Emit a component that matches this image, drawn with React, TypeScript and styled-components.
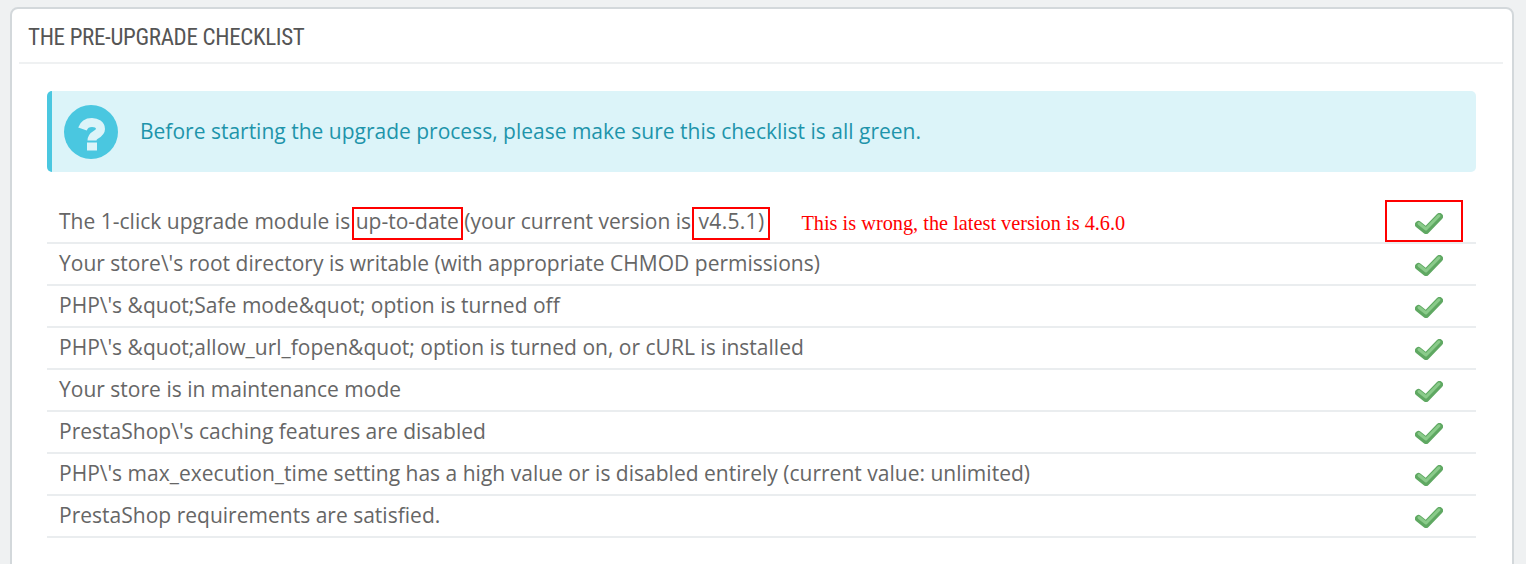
import type { ReactNode } from "react";
import styled, { createGlobalStyle } from "styled-components";

function CheckIcon() {
  return (
    <CheckSvg viewBox="0 0 28 24" aria-hidden="true">
      <path
        d="M3.5 13.5 L11 19.5 L24.5 5.5"
        fill="none"
        stroke="#5fa862"
        strokeWidth="7"
        strokeLinejoin="round"
        strokeLinecap="round"
      />
      <path
        d="M4 12.5 L11 18 L24 4.8"
        fill="none"
        stroke="#8acb8a"
        strokeWidth="3"
        strokeLinejoin="round"
        strokeLinecap="round"
      />
    </CheckSvg>
  );
}

function QuestionIcon() {
  return (
    <QuestionSvg viewBox="0 0 54 54" aria-hidden="true">
      <circle cx="27" cy="27" r="27" fill="#4ac7e0" />
      <path
        d="M18.5 24 C20 19.5 23.5 17.5 28 17.5 C32.5 17.5 36.5 20 36.5 24 C36.5 27 34 28.5 31.5 30 C29.5 31.2 28 32.5 28 35.5"
        fill="none"
        stroke="#dcf4f9"
        strokeWidth="9"
      />
      <rect x="23" y="37.5" width="10" height="8" fill="#dcf4f9" />
    </QuestionSvg>
  );
}

export default function App() {
  const rows: ReactNode[] = [
    <>
      The 1-click upgrade module is <Marked>up-to-date</Marked> (your current version is{" "}
      <Version>v4.5.1)</Version>
      <Note>This is wrong, the latest version is 4.6.0</Note>
    </>,
    "Your store\\'s root directory is writable (with appropriate CHMOD permissions)",
    "PHP\\'s &quot;Safe mode&quot; option is turned off",
    "PHP\\'s &quot;allow_url_fopen&quot; option is turned on, or cURL is installed",
    "Your store is in maintenance mode",
    "PrestaShop\\'s caching features are disabled",
    "PHP\\'s max_execution_time setting has a high value or is disabled entirely (current value: unlimited)",
    "PrestaShop requirements are satisfied.",
  ];

  return (
    <>
      <GlobalStyle />
      <Page>
        <Panel>
          <Heading>THE PRE-UPGRADE CHECKLIST</Heading>
          <Alert>
            <QuestionIcon />
            <AlertText>Before starting the upgrade process, please make sure this checklist is all green.</AlertText>
          </Alert>
          <Checklist>
            {rows.map((row, idx) => (
              <Row key={"row" + idx}>
                <Label>{row}</Label>
                <Status $marked={idx === 0}>
                  <CheckIcon />
                </Status>
              </Row>
            ))}
          </Checklist>
        </Panel>
      </Page>
    </>
  );
}

const GlobalStyle = createGlobalStyle`
  html, body {
    margin: 0;
    background: #eff1f2;
  }
`;

const Page = styled.div`
  height: 564px;
  overflow: hidden;
  padding: 7px 12px 0 10px;
  box-sizing: border-box;
`;

const Panel = styled.div`
  box-sizing: border-box;
  height: 600px;
  padding: 0 36px 0 7px;
  background: #fff;
  border: 2px solid #d3d8db;
  border-radius: 8px;
`;

const Heading = styled.h3`
  margin: 0 -27px 27px 0;
  height: 55px;
  box-sizing: border-box;
  padding: 15px 0 0 9px;
  font-family: "Liberation Sans Narrow", "Roboto Condensed", "Liberation Sans", sans-serif;
  font-size: 23px;
  line-height: 28px;
  font-weight: 400;
  letter-spacing: -0.32px;
  color: #555;
  border-bottom: 2px solid #eff1f2;
`;

const Alert = styled.div`
  display: flex;
  align-items: center;
  box-sizing: border-box;
  margin-left: 28px;
  height: 81px;
  padding-left: 12px;
  background: #dcf4f9;
  border-left: 5px solid #4ac7e0;
  border-radius: 5px;
`;

const QuestionSvg = styled.svg`
  flex: none;
  width: 54px;
  height: 54px;
  margin-right: 22px;
`;

const AlertText = styled.span`
  position: relative;
  top: -1px;
  font-family: "Open Sans", sans-serif;
  font-size: 21px;
  color: #1e94ab;
`;

const Checklist = styled.div`
  margin: 30px 0 0 28px;
`;

const Row = styled.div`
  display: flex;
  align-items: center;
  box-sizing: border-box;
  height: 42px;
  padding: 0 0 2px 12px;
  border-bottom: 2px solid #eaedef;
`;

const Label = styled.div`
  flex: 1;
  font-family: "Open Sans", sans-serif;
  font-size: 21px;
  letter-spacing: 0.012px;
  color: #666;
  white-space: nowrap;
`;

const Marked = styled.span`
  position: relative;

  &::after {
    content: "";
    position: absolute;
    inset: 0 -4px -5px -4px;
    border: 2px solid #f00;
  }
`;

const Version = styled(Marked)`
  margin-left: 2px;
  letter-spacing: 0.3px;

  &::after {
    inset: 0 -6px -5px -7px;
  }
`;

const Note = styled.span`
  margin-left: 37px;
  vertical-align: -1px;
  font-family: "Liberation Serif", serif;
  font-size: 20.3px;
  color: #f00;
`;

const Status = styled.div<{ $marked: boolean }>`
  position: relative;
  display: flex;
  justify-content: center;
  width: 92px;
  margin-right: 1px;

  &::after {
    content: "";
    display: ${(props) => (props.$marked ? "block" : "none")};
    position: absolute;
    left: 2px;
    right: 12px;
    top: -7px;
    height: 42px;
    box-sizing: border-box;
    border: 2px solid #f00;
  }
`;

const CheckSvg = styled.svg`
  width: 28px;
  height: 24px;
  margin-top: 4px;
  filter: blur(0.4px);
`;
